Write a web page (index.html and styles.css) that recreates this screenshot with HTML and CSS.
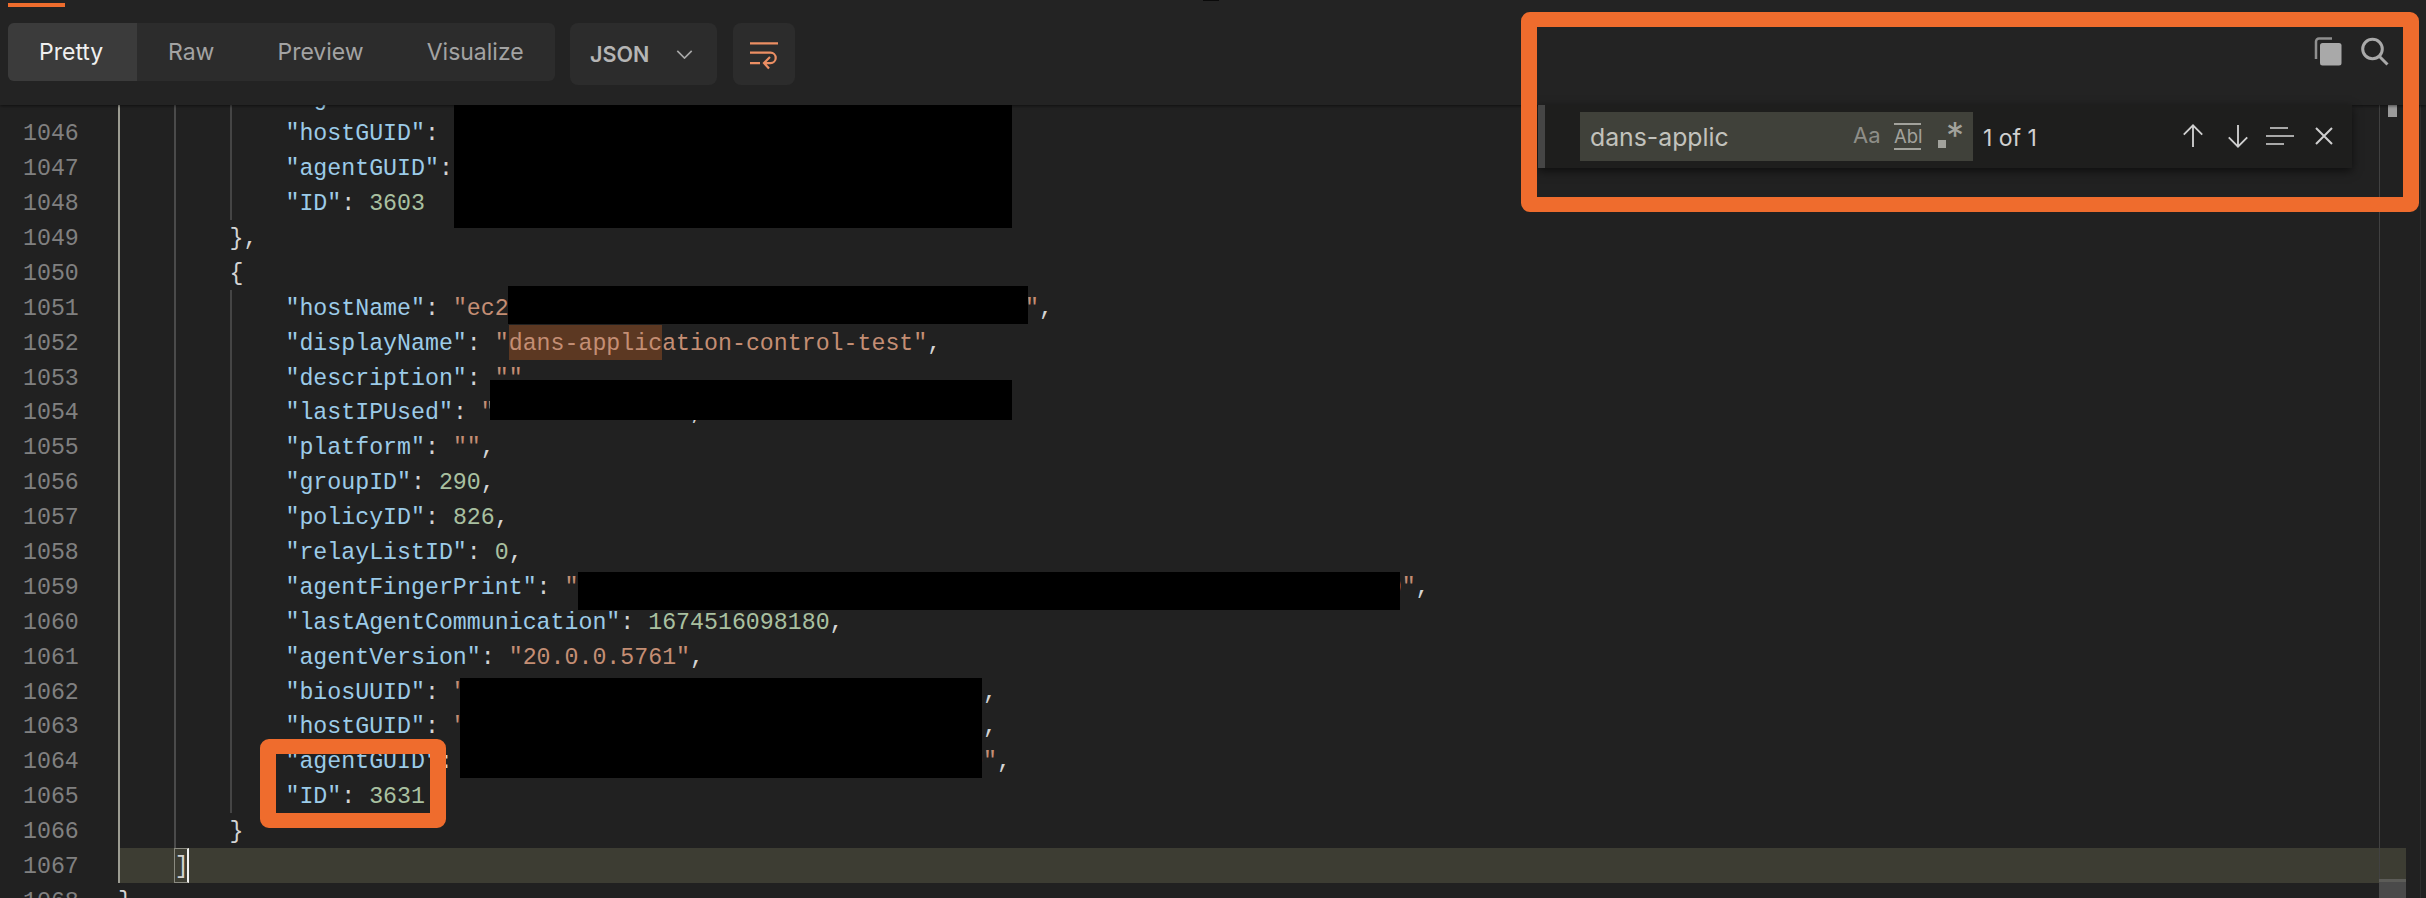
FILE: index.html
```html
<!DOCTYPE html>
<html lang="en">
<head>
<meta charset="utf-8">
<title>Response</title>
<link rel="stylesheet" href="styles.css">
</head>
<body>
<div class="page">
  <header class="toolbar">
    <span class="tab-accent"></span>
    <span class="notch"></span>
    <nav class="tabs">
      <span class="tab tab-active">Pretty</span>
      <span class="tab">Raw</span>
      <span class="tab">Preview</span>
      <span class="tab">Visualize</span>
    </nav>
    <div class="format">
      <span>JSON</span>
      <svg class="chevron" viewBox="0 0 18 10"><path d="M1 1l8 8 8-8"/></svg>
    </div>
    <div class="wrap-btn">
      <svg class="wrap-icon" viewBox="0 0 32 32"><path d="M2 5.300h28M2 14.700h20.500a5.200 5.200 0 0 1 0 10.400H16M2 25.100h10M22 19l-6 6 5 5.500"/></svg>
    </div>
    <div class="tools">
      <svg class="copy-icon" viewBox="0 0 28 29"><path class="copy-back" d="M2 22V4.500a3 3 0 0 1 3-3h13"/><rect x="6" y="6" width="21.500" height="22.500" rx="2.500"/></svg>
      <svg class="search-icon" viewBox="0 0 30 30"><circle cx="12.500" cy="12" r="9.800"/><path d="M19.500 19.500l8 8"/></svg>
    </div>
  </header>

  <main class="editor">
    <div class="rows">
      <div class="row"><span class="num">1045</span><code class="code deep">            <i class="k">"agentVersion"</i>: <i class="s">"20.0.05"</i>,</code></div>
      <div class="row"><span class="num">1046</span><code class="code deep">            <i class="k">"hostGUID"</i>: <i class="s">"00000000-0000-0000-0000-000000000000"</i>,</code></div>
      <div class="row"><span class="num">1047</span><code class="code deep">            <i class="k">"agentGUID"</i>: <i class="s">"00000000-0000-0000-0000-000000000000"</i>,</code></div>
      <div class="row"><span class="num">1048</span><code class="code deep">            <i class="k">"ID"</i>: <i class="n">3603</i></code></div>
      <div class="row"><span class="num">1049</span><code class="code">        },</code></div>
      <div class="row"><span class="num">1050</span><code class="code">        {</code></div>
      <div class="row"><span class="num">1051</span><code class="code deep">            <i class="k">"hostName"</i>: <i class="s">"ec2xxxxxxxxxxxxxxxxxxxxxxxxxxxxxxxxxxxxx"</i>,</code></div>
      <div class="row"><span class="num">1052</span><code class="code deep">            <i class="k">"displayName"</i>: <i class="s">"<b class="match">dans-applic</b>ation-control-test"</i>,</code></div>
      <div class="row"><span class="num">1053</span><code class="code deep">            <i class="k">"description"</i>: <i class="s">""</i>,</code></div>
      <div class="row"><span class="num">1054</span><code class="code deep">            <i class="k">"lastIPUsed"</i>: <i class="s">"10.10.100.100"</i>,</code></div>
      <div class="row"><span class="num">1055</span><code class="code deep">            <i class="k">"platform"</i>: <i class="s">""</i>,</code></div>
      <div class="row"><span class="num">1056</span><code class="code deep">            <i class="k">"groupID"</i>: <i class="n">290</i>,</code></div>
      <div class="row"><span class="num">1057</span><code class="code deep">            <i class="k">"policyID"</i>: <i class="n">826</i>,</code></div>
      <div class="row"><span class="num">1058</span><code class="code deep">            <i class="k">"relayListID"</i>: <i class="n">0</i>,</code></div>
      <div class="row"><span class="num">1059</span><code class="code deep">            <i class="k">"agentFingerPrint"</i>: <i class="s">"00:00:00:00:00:00:00:00:00:00:00:00:00:00:00:00:00:00:00:00"</i>,</code></div>
      <div class="row"><span class="num">1060</span><code class="code deep">            <i class="k">"lastAgentCommunication"</i>: <i class="n">1674516098180</i>,</code></div>
      <div class="row"><span class="num">1061</span><code class="code deep">            <i class="k">"agentVersion"</i>: <i class="s">"20.0.0.5761"</i>,</code></div>
      <div class="row"><span class="num">1062</span><code class="code deep">            <i class="k">"biosUUID"</i>: <i class="s">"00000000-0000-0000-0000-000000000000"</i>,</code></div>
      <div class="row"><span class="num">1063</span><code class="code deep">            <i class="k">"hostGUID"</i>: <i class="s">"00000000-0000-0000-0000-000000000000"</i>,</code></div>
      <div class="row"><span class="num">1064</span><code class="code deep">            <i class="k">"agentGUID"</i>: <i class="s">"00000000-0000-0000-0000-000000000000"</i>,</code></div>
      <div class="row"><span class="num">1065</span><code class="code deep">            <i class="k">"ID"</i>: <i class="n">3631</i></code></div>
      <div class="row"><span class="num">1066</span><code class="code">        }</code></div>
      <div class="row"><span class="num">1067</span><code class="code active">    <b class="bracket">]</b></code></div>
      <div class="row"><span class="num">1068</span><code class="code last">}</code></div>
    </div>
    <span class="ruler"></span>
    <span class="edge"></span>
    <span class="thumb"></span>
    <span class="marker"></span>
  </main>

  <span class="redact r1"></span>
  <span class="redact r2"></span>
  <span class="redact r3"></span>
  <span class="redact r4"></span>
  <span class="redact r5"></span>

  <aside class="find">
    <div class="find-input">
      <span class="find-text">dans-applic</span>
      <span class="opt-aa">Aa</span>
      <span class="opt-word">Abl</span>
      <span class="opt-regex"><em class="dot"></em><span class="star">*</span></span>
    </div>
    <span class="find-count">1 of 1</span>
    <div class="find-actions">
      <svg class="fa fa-arrow" viewBox="0 0 26 26"><path d="M13 25V2M3 11.500L13 1.500l10 10"/></svg>
      <svg class="fa fa-arrow" viewBox="0 0 26 26"><path d="M13 1v23M3 14.500l10 10 10-10"/></svg>
      <svg class="fa fa-list" viewBox="0 0 28 20"><path class="soft" d="M4 2h18M0 10h28M0 18h18"/></svg>
      <svg class="fa fa-close" viewBox="0 0 18 18"><path d="M1 1l16 16M17 1L1 17"/></svg>
    </div>
  </aside>

  <span class="callout callout-find"></span>
  <span class="callout callout-id"></span>
</div>
</body>
</html>
```

FILE: styles.css
```css
* { box-sizing: border-box; }
html, body { margin: 0; padding: 0; }
body { background: #212121; font-family: Inter, "Liberation Sans", sans-serif; overflow: hidden; }
.page { position: relative; width: 2426px; height: 898px; overflow: hidden; }

.toolbar {
  position: relative; z-index: 2; display: flex; align-items: flex-start;
  height: 105px; padding: 23px 0 0 8px; background: #232323;
  box-shadow: 0 1px 3px rgba(0,0,0,.55);
}
.tab-accent { position: absolute; left: 8px; top: 3px; width: 57px; height: 4px; background: #ee6c2d; }
.notch { position: absolute; left: 1203px; top: 0; width: 16px; height: 1px; background: #0a0a0a; }
.tabs { display: flex; width: 547px; height: 58px; background: #2c2c2c; border-radius: 6px; overflow: hidden; color: #a3a3a3; font-size: 23px; }
.tab { display: flex; align-items: center; padding: 0 31px; margin-right: 1px; }
.tab:last-child { margin-right: 0; }
.tab-active { padding: 0 31px; width: 129px; background: #3b3b3b; color: #f0f0f0; margin-right: 0; }
.format {
  display: flex; align-items: center; gap: 27px; width: 147px; height: 62px; margin-left: 15px; padding-left: 20px;
  background: #2c2c2c; border-radius: 8px; color: #b5b5b5; font-size: 21.500px; font-weight: 600;
}
.chevron { width: 17px; height: 9px; fill: none; stroke: #a8a8a8; stroke-width: 1.800; }
.wrap-btn { display: flex; align-items: center; justify-content: center; width: 62px; height: 62px; margin-left: 16px; background: #2c2c2c; border-radius: 8px; }
.wrap-icon { width: 32px; height: 32px; fill: none; stroke: #ec8e63; stroke-width: 2.200; }
.tools { display: flex; align-items: flex-start; gap: 18px; margin-left: auto; margin-right: 36px; padding-top: 14px; }
.copy-icon { width: 28px; height: 29px; fill: #a9a9a9; }
.copy-back { fill: none; stroke: #8f8f8f; stroke-width: 2.500; }
.search-icon { width: 30px; height: 30px; fill: none; stroke: #a9a9a9; stroke-width: 3; }

.editor { position: relative; height: 793px; overflow: hidden; padding-right: 20px; }
.rows { margin-top: -24.600px; }
.row { display: flex; height: 34.900px; font: 23.250px/34.900px "Liberation Mono", monospace; }
.num { flex: none; width: 118px; padding: 2px 0 0 23px; color: #808080; }
.code {
  flex: 1; font: inherit; white-space: pre; color: #d4d4d4; padding-top: 2px;
  background-image: linear-gradient(#9c9c92, #9c9c92), linear-gradient(#4b4b4b, #4b4b4b);
  background-size: 2px 100%; background-repeat: no-repeat; background-position: 0 0, 55.800px 0;
}
.code.deep {
  background-image: linear-gradient(#9c9c92, #9c9c92), linear-gradient(#4b4b4b, #4b4b4b), linear-gradient(#454545, #454545);
  background-position: 0 0, 55.800px 0, 111.600px 0;
}
.code.active { background-color: #3d3d33; background-image: linear-gradient(#9c9c92, #9c9c92); background-position: 0 0; padding-top: 0; }
.code.last { background: none; }
.code i { font-style: normal; }
.k { color: #9ccbe8; }
.s { color: #c48e74; }
.n { color: #a9c0a0; }
.match { display: inline-block; height: 34.900px; margin-top: -2px; padding-top: 2px; vertical-align: top; font-weight: 400; background: #5c3822; }
.bracket { display: inline-block; width: 15.500px; height: 34.900px; padding-top: 1px; vertical-align: top; font-weight: 400; border: 1px solid #8a8a80; border-right: 2px solid #f2f2f2; }
.ruler { position: absolute; left: 2379px; top: 0; bottom: 0; width: 1px; background: #414141; }
.edge { position: absolute; left: 2420px; top: 0; bottom: 0; width: 1px; background: #2e2e2e; }
.thumb { position: absolute; left: 2379px; bottom: 0; width: 27px; height: 19px; background: #4a4a4a; border-top: 3px solid #5c5c58; }
.marker { position: absolute; left: 2388px; top: 0; width: 9px; height: 12px; background: #9b9b9b; }

.redact { position: absolute; z-index: 1; background: #000; }
.r1 { left: 454px; top: 105px; width: 558px; height: 123px; }
.r2 { left: 508px; top: 286px; width: 520px; height: 38px; }
.r3 { left: 490px; top: 380px; width: 522px; height: 40px; }
.r4 { left: 578px; top: 572px; width: 822px; height: 38px; }
.r5 { left: 460px; top: 678px; width: 522px; height: 100px; }

.find {
  position: absolute; z-index: 3; left: 1538px; top: 105px; width: 814px; height: 63px;
  display: flex; align-items: center; padding: 0 0 0 35px;
  background: #1e1e1d; border-left: 7px solid #454545;
  box-shadow: 0 3px 9px rgba(0,0,0,.6); color: #c8c8c8;
}
.find-input { display: flex; align-items: center; width: 393px; height: 49px; margin-top: -1px; padding-left: 10px; background: #40413a; }
.find-text { width: 263px; font-size: 24.800px; color: #c2c2bc; margin-top: 1px; }
.opt-aa { width: 41px; font-size: 22px; color: #8e8e88; margin-top: -3px; }
.opt-word { height: 23px; width: 27px; margin-right: 17px; border-top: 2px solid #a2a29c; border-bottom: 2px solid #a2a29c; box-sizing: content-box; font-size: 18.500px; line-height: 22px; text-align: center; color: #a2a29c; }
.opt-regex { position: relative; display: block; width: 24px; height: 24px; color: #a2a29c; }
.dot { position: absolute; left: 0; bottom: 0; width: 8px; height: 8px; background: #a2a29c; }
.star { position: absolute; left: 8px; top: -7px; font-size: 36px; line-height: 36px; }
.find-count { margin-left: 10px; font-size: 23px; color: #d0d0d0; margin-top: 3px; }
.find-actions { display: flex; align-items: center; margin-left: 144px; margin-top: -2px; }
.fa { display: block; fill: none; stroke: #d0d0d0; stroke-width: 2; }
.fa-arrow { width: 24px; height: 24px; margin-right: 21px; }
.fa-list { width: 28px; height: 20px; margin-left: -5px; margin-right: 21px; stroke: #a8a8a8; }
.fa-close { width: 18px; height: 18px; }

.callout { position: absolute; z-index: 4; border: 16px solid #ef6c2d; border-top-width: 15px; border-bottom-width: 15px; border-radius: 9px; }
.callout-find { left: 1521px; top: 12px; width: 898px; height: 200px; }
.callout-id { left: 260px; top: 739px; width: 186px; height: 89px; }
```
